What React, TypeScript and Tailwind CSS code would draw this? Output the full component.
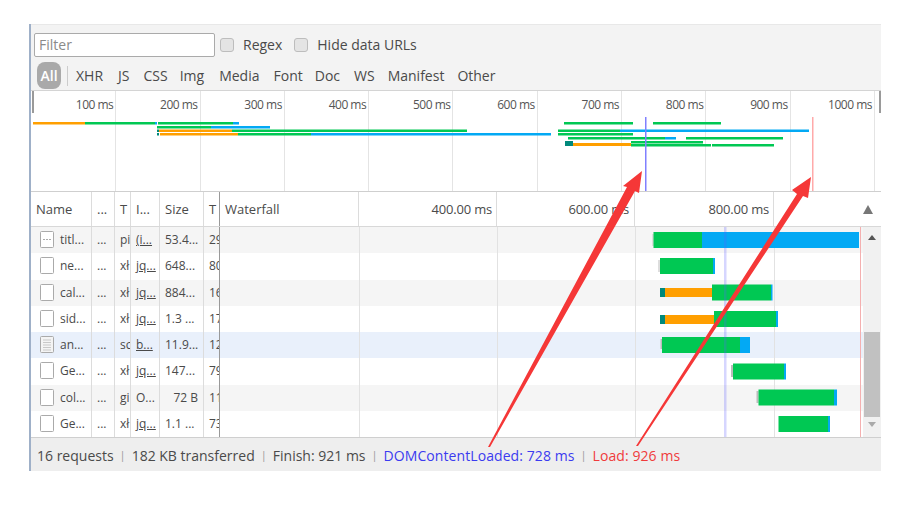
const font = { fontFamily: '"Open Sans", "Noto Sans", sans-serif' };

const ticks = ["100 ms", "200 ms", "300 ms", "400 ms", "500 ms", "600 ms", "700 ms", "800 ms", "900 ms", "1000 ms"];
const filters = [
  ["XHR", "mr-[15px]"],
  ["JS", "mr-[14px]"],
  ["CSS", "mr-[12px]"],
  ["Img", "mr-[15px]"],
  ["Media", "mr-[14px]"],
  ["Font", "mr-[12px]"],
  ["Doc", "mr-[14px]"],
  ["WS", "mr-[13px]"],
  ["Manifest", "mr-[13px]"],
  ["Other", ""],
];

type Row = {
  name: string;
  type: string;
  init: string;
  link: boolean;
  size: string;
  time: string;
  bg: string;
  icon: "blank" | "dash" | "lines";
};

const rows: Row[] = [
  { name: "titl...", type: "pi", init: "(i...", link: true, size: "53.4...", time: "29", bg: "bg-[#f5f5f5]", icon: "dash" },
  { name: "ne...", type: "xł", init: "jq...", link: true, size: "648...", time: "80", bg: "bg-white", icon: "blank" },
  { name: "cal...", type: "xł", init: "jq...", link: true, size: "884...", time: "16", bg: "bg-[#f5f5f5]", icon: "blank" },
  { name: "sid...", type: "xł", init: "jq...", link: true, size: "1.3 ...", time: "17", bg: "bg-white", icon: "blank" },
  { name: "an...", type: "sc", init: "b...", link: true, size: "11.9...", time: "12", bg: "bg-[#e9f0fb]", icon: "lines" },
  { name: "Ge...", type: "xł", init: "jq...", link: true, size: "147...", time: "79", bg: "bg-white", icon: "blank" },
  { name: "col...", type: "gi", init: "O...", link: false, size: "72 B", time: "11", bg: "bg-[#f5f5f5]", icon: "blank" },
  { name: "Ge...", type: "xł", init: "jq...", link: true, size: "1.1 ...", time: "73", bg: "bg-white", icon: "blank" },
];

// x1, x2, y, height, colour: page coordinates, the svgs use them as viewBox
const overviewBars: [number, number, number, number, string][] = [
  [33, 85, 122, 2.5, "#ff9f00"],
  [85, 155, 122, 2.5, "#00c853"],
  [155, 157, 122, 2.5, "#03a9f4"],
  [158, 233, 122, 2.5, "#00c853"],
  [233, 239, 122, 2.5, "#03a9f4"],
  [157, 211, 126, 2.5, "#00c853"],
  [211, 270, 126, 2.5, "#03a9f4"],
  [157, 159, 129.5, 2.5, "#00897b"],
  [159, 232, 129.5, 2.5, "#ff9f00"],
  [232, 467, 129.5, 2.5, "#00c853"],
  [157, 159, 133, 2.5, "#00897b"],
  [160, 238, 133, 2.5, "#ff9f00"],
  [238, 311, 133, 2.5, "#00c853"],
  [311, 551, 133, 2.5, "#03a9f4"],
  [564, 633, 122, 2.5, "#00c853"],
  [653, 721, 122, 2.5, "#00c853"],
  [558, 620, 129.5, 2.5, "#00c853"],
  [620, 809, 129.5, 2.5, "#03a9f4"],
  [558, 633, 133, 2.5, "#00c853"],
  [568, 665, 137, 2.5, "#00c853"],
  [665, 676, 137, 2.5, "#03a9f4"],
  [686, 783, 137, 2.5, "#00c853"],
  [631, 703, 141, 2.5, "#00c853"],
  [565, 573, 141, 5, "#00897b"],
  [573, 631, 143, 3, "#ff9f00"],
  [631, 711, 144, 2.5, "#00c853"],
  [712, 774, 144, 2.5, "#00c853"],
];

const waterfallBars: [number, number, number, number, string][] = [
  [652, 654, 234, 12, "#dddddd"],
  [653.5, 702, 232, 16, "#00c853"],
  [702, 859, 232, 16, "#03a9f4"],
  [658, 660, 260, 12, "#dddddd"],
  [660, 713, 258, 16, "#00c853"],
  [713, 715, 258, 16, "#03a9f4"],
  [660, 665, 288, 9, "#00897b"],
  [665, 712, 288, 9, "#ff9f00"],
  [712, 771, 284.5, 16, "#00c853"],
  [771, 772.5, 284.5, 16, "#03a9f4"],
  [660, 665, 315, 9, "#00897b"],
  [665, 714, 315, 9, "#ff9f00"],
  [714, 776, 311, 16, "#00c853"],
  [776, 778, 311, 16, "#03a9f4"],
  [660.5, 662, 339, 10, "#bbbbbb"],
  [662, 740, 337, 16, "#00c853"],
  [740, 750, 337, 16, "#03a9f4"],
  [731, 733, 365, 12, "#bbbbbb"],
  [733, 784, 363.5, 16, "#00c853"],
  [784, 786, 363.5, 16, "#03a9f4"],
  [756.5, 758.5, 391, 12, "#bbbbbb"],
  [758.5, 834, 389.5, 16, "#00c853"],
  [834, 837, 389.5, 16, "#03a9f4"],
  [778.5, 828, 416, 16, "#00c853"],
  [828, 830, 416, 16, "#03a9f4"],
];

function Bars({ bars }: { bars: [number, number, number, number, string][] }) {
  return (
    <>
      {bars.map(([x1, x2, y, h, fill], i) => (
        <rect key={i} x={x1} y={y} width={x2 - x1} height={h} fill={fill} />
      ))}
    </>
  );
}

function FileIcon({ kind }: { kind: Row["icon"] }) {
  return (
    <svg viewBox="0 0 15 18" className="w-[15px] h-[18px] shrink-0">
      <rect x="0.5" y="0.5" width="13" height="16" rx="1" fill={kind === "lines" ? "#f4f4f4" : "#fff"} stroke="#aaa" />
      {kind === "dash" && <path d="M3 8.5h2M6 8.5h2M9 8.5h2" stroke="#aaa" />}
      {kind === "lines" && <path d="M3 4h8M3 6.5h8M3 9h8M3 11.5h8M3 14h8" stroke="#c8c8c8" />}
    </svg>
  );
}

function Checkbox({ className }: { className: string }) {
  return <span className={`w-[14px] h-[14px] rounded-[3px] border border-[#bdbdbd] bg-[#e4e4e4] shrink-0 ${className}`} />;
}

function Cell({ className, children }: { className: string; children?: React.ReactNode }) {
  return (
    <div className={`h-full flex items-center overflow-hidden whitespace-nowrap border-r shrink-0 ${className}`}>
      {children}
    </div>
  );
}

function Arrow({ points }: { points: string }) {
  return <polygon points={points} fill="#f53737" />;
}

function Sep() {
  return <span className="mx-[6px] text-[#999] text-[11px]">|</span>;
}

export default function App() {
  return (
    <div className="w-[923px] h-[510px] bg-white pt-[24px] pl-[29px] overflow-hidden relative text-[#4a4a4a]" style={font}>
      <div className="w-[852px] h-[447px] border-l-2 border-[#9fb0c8] flex flex-col">
        {/* toolbar */}
        <div className="h-[67px] bg-[#f3f3f3] border-b border-[#d4d4d4] border-t border-t-[#e8e8e8] shrink-0 text-[14px]">
          <div className="flex items-center h-[36px] pl-[3px] pt-[3px]">
            <div className="w-[181px] h-[24px] bg-white border border-[#aaa] rounded-[2px] pl-[4px] flex items-center text-[#8a8a8a]">
              Filter
            </div>
            <Checkbox className="ml-[5px] mr-[9px]" />
            <span className="mr-[12px]">Regex</span>
            <Checkbox className="mr-[9px]" />
            <span>Hide data URLs</span>
          </div>
          <div className="flex items-center h-[29px] pl-[6px]">
            <span className="w-[24px] h-[27px] rounded-[8px] bg-[#a9a9a9] text-white font-semibold flex items-center justify-center">All</span>
            <span className="w-px h-[20px] bg-[#ccc] ml-[6px] mr-[8px]" />
            {filters.map(([label, gap]) => (
              <span key={label} className={gap}>{label}</span>
            ))}
          </div>
        </div>

        {/* overview */}
        <div className="h-[101px] bg-white border-b border-[#cfcfcf] relative shrink-0">
          <div className="flex h-full pl-px">
            {ticks.map((t) => (
              <div key={t} className="w-[84.3px] h-full border-r border-[#e4e4e4] text-right pr-[2px] pt-[5px] text-[12px] tracking-[-0.5px] text-[#555] shrink-0">
                {t}
              </div>
            ))}
          </div>
          <svg viewBox="31 91 850 100" className="absolute left-0 top-0 w-[850px] h-[100px]">
            <rect x="32" y="91" width="2" height="22" fill="#9a9a9a" />
            <rect x="879" y="91" width="2" height="22" fill="#9a9a9a" />
            <Bars bars={overviewBars} />
            <rect x="645" y="117" width="1.5" height="75" fill="#8080ff" />
            <rect x="812" y="117" width="1.5" height="75" fill="#ffaaaa" />
          </svg>
        </div>

        {/* table header */}
        <div className="h-[35px] flex items-center bg-white border-b border-[#d8d8d8] shrink-0 text-[13px] relative">
          <Cell className="w-[61px] pl-[5px] pt-[2px] border-[#dcdcdc]">Name</Cell>
          <Cell className="w-[23px] pl-[5px] pt-[2px] border-[#dcdcdc]">...</Cell>
          <Cell className="w-[16px] pl-[5px] pt-[2px] border-[#dcdcdc]">T</Cell>
          <Cell className="w-[29px] pl-[5px] pt-[2px] border-[#dcdcdc]">I...</Cell>
          <Cell className="w-[44px] pl-[5px] pt-[2px] border-[#dcdcdc]">Size</Cell>
          <Cell className="w-[16px] pl-[5px] pt-[2px] border-[#999]">T</Cell>
          <Cell className="w-[139px] pl-[5px] pt-[2px] border-[#dcdcdc]">Waterfall</Cell>
          <Cell className="w-[138px] justify-end pr-[4px] pt-[2px] tracking-[-0.2px] border-[#dcdcdc]">400.00 ms</Cell>
          <Cell className="w-[138px] justify-end pr-[5px] pt-[2px] tracking-[-0.2px] border-[#dcdcdc]">600.00 ms</Cell>
          <Cell className="w-[139px] justify-end pr-[4px] pt-[2px] tracking-[-0.2px] border-[#dcdcdc]">800.00 ms</Cell>
          <div className="flex-1 flex justify-end pr-[8px]">
            <span className="w-0 h-0 border-x-[5px] border-x-transparent border-b-[9px] border-b-[#777]" />
          </div>
        </div>

        {/* rows + scrollbar */}
        <div className="h-[210px] flex shrink-0">
          <div className="w-[832px] relative">
            {rows.map((r) => (
              <div key={r.name + r.size} className={`h-[26.25px] flex items-center text-[12px] ${r.bg}`}>
                <Cell className="w-[61px] pl-[9px] gap-[5px] border-[#dcdcdc]">
                  <FileIcon kind={r.icon} />
                  <span>{r.name}</span>
                </Cell>
                <Cell className="w-[23px] pl-[5px] border-[#dcdcdc]">...</Cell>
                <Cell className="w-[16px] pl-[5px] border-[#dcdcdc]">{r.type}</Cell>
                <Cell className={`w-[29px] pl-[5px] border-[#dcdcdc] ${r.link ? "underline" : ""}`}>{r.init}</Cell>
                <Cell className={`w-[44px] border-[#dcdcdc] ${r.size === "72 B" ? "justify-end pr-[5px]" : "pl-[5px]"}`}>{r.size}</Cell>
                <Cell className="w-[16px] pl-[5px] border-[#999]">{r.time}</Cell>
              </div>
            ))}
            <svg viewBox="31 227 832 210" className="absolute left-0 top-0 w-[832px] h-[210px]">
              <path d="M359.5 227v210M497.5 227v210M635.5 227v210M774.5 227v210" stroke="#e2e2e2" fill="none" />
              <Bars bars={waterfallBars} />
              <rect x="724" y="227" width="2.5" height="210" fill="#5a5aff" opacity="0.25" />
              <rect x="860" y="227" width="1" height="210" fill="#f4b0b0" />
            </svg>
          </div>
          <div className="flex-1 bg-[#f1f1f1] flex flex-col items-center relative">
            <span className="mt-[8px] w-0 h-0 border-x-[4px] border-x-transparent border-b-[5px] border-b-[#555]" />
            <div className="absolute left-px right-px top-[105px] h-[85px] bg-[#c1c1c1]" />
            <span className="absolute bottom-[10px] w-0 h-0 border-x-[4px] border-x-transparent border-t-[5px] border-t-[#aaa]" />
          </div>
        </div>

        {/* status bar */}
        <div className="flex-1 bg-[#eeeeee] border-t border-[#cfcfcf] flex items-center pl-[6px] pt-[1px] text-[14px] whitespace-nowrap">
          <span>16 requests</span>
          <Sep />
          <span>182 KB transferred</span>
          <Sep />
          <span>Finish: 921 ms</span>
          <Sep />
          <span className="text-[#3b3bf0] tracking-[0.08px]">DOMContentLoaded: 728 ms</span>
          <Sep />
          <span className="text-[#f03b3b] tracking-[0.08px]">Load: 926 ms</span>
        </div>
      </div>

      {/* annotation arrows */}
      <svg viewBox="0 0 923 510" className="absolute left-0 top-0 w-[923px] h-[510px] pointer-events-none">
        <Arrow points="488,447 627,187 623,186 642,171 639,193 635,191 490,447" />
        <Arrow points="636,446 797,194 792,190 811,177 808,198 803,196 638,446" />
      </svg>
    </div>
  );
}
